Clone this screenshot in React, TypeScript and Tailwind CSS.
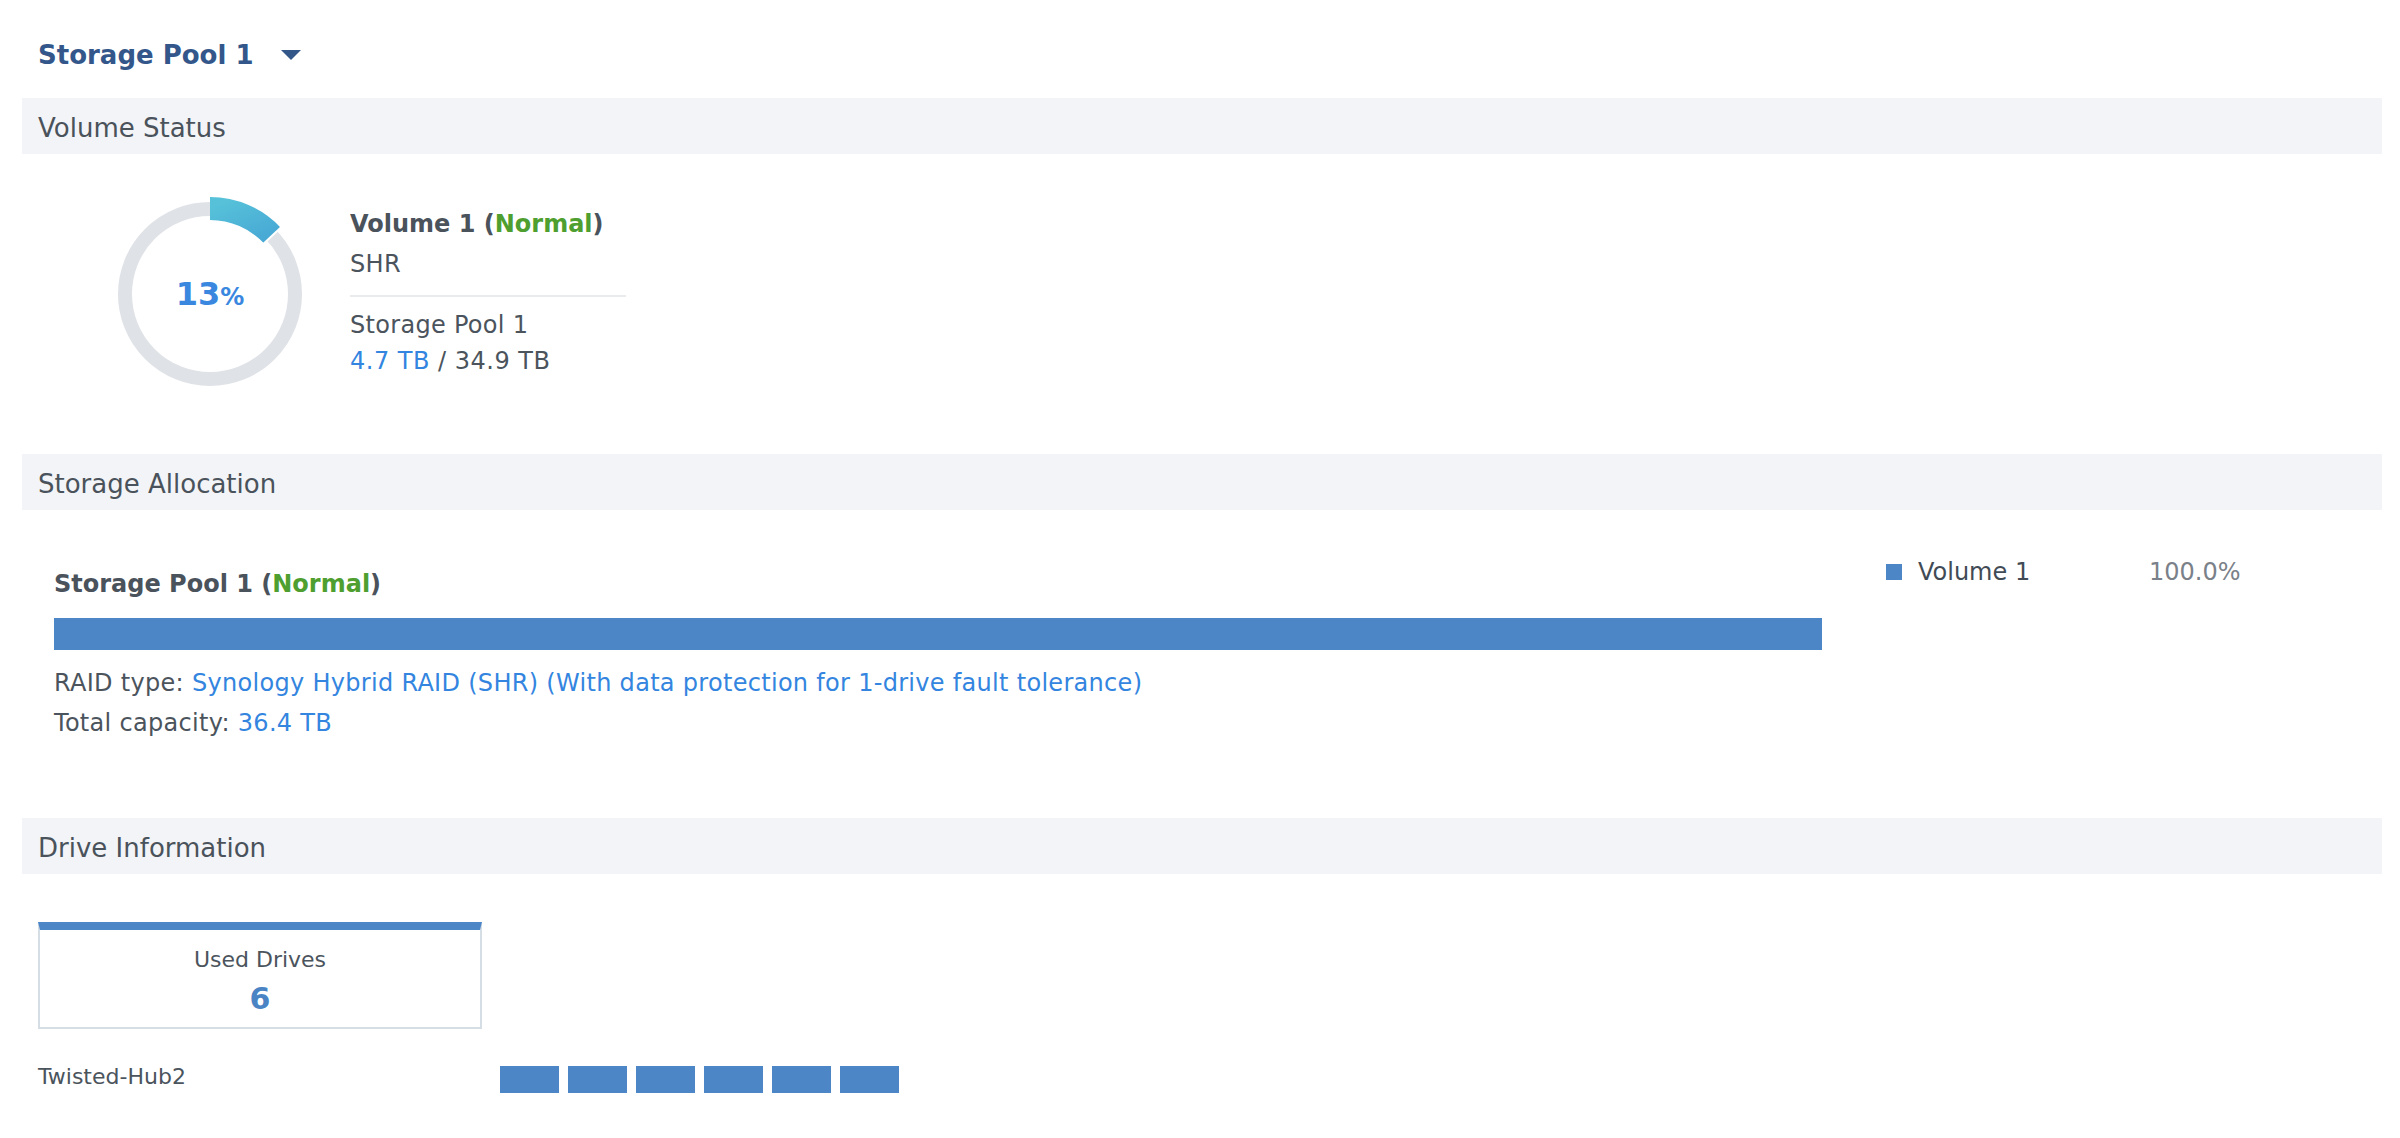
function SectionHeader({ title }: { title: string }) {
  return (
    <div className="flex h-[56px] items-center bg-[#f3f4f7] pl-[16px] pt-[3px] text-[26px] leading-[36px] text-[#4a525b]">
      {title}
    </div>
  );
}

function UsageRing() {
  return (
    <div className="relative h-[200px] w-[200px] shrink-0">
      <svg width="200" height="200" viewBox="0 0 200 200">
        <defs>
          <linearGradient id="ringBlue" x1="0" y1="0" x2="1" y2="1">
            <stop offset="0%" stopColor="#56c1d9" />
            <stop offset="100%" stopColor="#48a9d5" />
          </linearGradient>
        </defs>
        <circle cx="100" cy="100" r="85" fill="none" stroke="#dfe2e6" strokeWidth="14" />
        <path d="M100 14.5 A85.5 85.5 0 0 1 162.3 41.5" fill="none" stroke="url(#ringBlue)" strokeWidth="23" />
        <line x1="152.5" y1="50.7" x2="172.2" y2="32.2" stroke="#ffffff" strokeWidth="2" />
      </svg>
      {/* percentage in the middle */}
      <div className="absolute inset-0 flex items-center justify-center pt-[3px] font-bold text-[#3a87df]">
        <span className="text-[32px] leading-[36px]">
          13<span className="text-[24px]">%</span>
        </span>
      </div>
    </div>
  );
}

function VolumeStatus() {
  return (
    <div className="flex h-[300px] items-start pl-[88px] pt-[40px]">
      <UsageRing />
      <div className="ml-[40px] mt-[10px] w-[276px] text-[24px] text-[#4b545d]">
        <div className="font-bold leading-[40px] text-[#4a525b]">
          Volume 1 (<span className="text-[#4e9f2f]">Normal</span>)
        </div>
        <div className="leading-[40px] tracking-[0.3px]">SHR</div>
        <div className="mt-[11px] h-[2px] bg-[#e9ebef]" />
        <div className="mt-[10px] leading-[36px] tracking-[0.3px]">Storage Pool 1</div>
        <div className="leading-[36px] tracking-[0.5px]">
          <span className="text-[#3385e0]">4.7 TB</span> / 34.9 TB
        </div>
      </div>
    </div>
  );
}

function StorageAllocation() {
  return (
    <div className="flex h-[308px] items-start pl-[32px] text-[24px] text-[#4b545d]">
      <div className="w-[1768px] pt-[58px]">
        <div className="font-bold leading-[32px] text-[#4a525b]">
          Storage Pool 1 (<span className="text-[#4e9f2f]">Normal</span>)
        </div>
        <div className="mt-[18px] h-[32px] bg-[#4d86c6]" />
        <div className="mt-[13px] leading-[40px] tracking-[0.3px]">
          RAID type:{' '}
          <span className="text-[#3385e0]">
            Synology Hybrid RAID (SHR) (With data protection for 1-drive fault tolerance)
          </span>
        </div>
        <div className="leading-[40px] tracking-[0.3px]">
          Total capacity: <span className="text-[#3385e0]">36.4 TB</span>
        </div>
      </div>

      {/* legend */}
      <div className="ml-[64px] pt-[46px]">
        <div className="flex h-[32px] items-center leading-[32px]">
          <div className="h-[16px] w-[16px] bg-[#4d86c6]" />
          <span className="ml-[16px] w-[231px] text-[#414b55]">Volume 1</span>
          <span className="text-[#7a8189]">100.0%</span>
        </div>
      </div>
    </div>
  );
}

function DriveInformation() {
  const drives = [1, 2, 3, 4, 5, 6];
  return (
    <div className="pl-[16px] pt-[48px] text-[#4b545d]">
      <div className="box-border flex h-[107px] w-[444px] flex-col items-center border-x-2 border-b-2 border-t-8 border-x-[#d5dde5] border-b-[#d5dde5] border-t-[#4d86c6] pt-[16px]">
        <div className="text-[22px] leading-[28px]">Used Drives</div>
        <div className="mt-[7px] text-[30px] font-bold leading-[36px] text-[#4a84c5]">6</div>
      </div>

      <div className="mt-[37px] flex items-start">
        <div className="w-[462px] text-[22px] leading-[21px]">Twisted-Hub2</div>
        <div className="flex gap-[9px]">
          {drives.map((d) => (
            <div key={d} className="h-[27px] w-[59px] bg-[#4d86c6]" />
          ))}
        </div>
      </div>
    </div>
  );
}

export default function App() {
  return (
    <div className="min-h-screen w-full bg-white pl-[22px] pr-[18px] font-['DejaVu_Sans',sans-serif]">
      {/* pool title */}
      <div className="flex h-[98px] items-start pl-[16px] pt-[37px]">
        <div className="flex h-[36px] items-center">
          <span className="text-[26px] font-bold leading-[36px] text-[#33578a]">Storage Pool 1</span>
          <svg className="ml-[27px]" width="20" height="10" viewBox="0 0 20 10">
            <path d="M0 0 H20 L10 10 Z" fill="#34578a" />
          </svg>
        </div>
      </div>

      <SectionHeader title="Volume Status" />
      <VolumeStatus />

      <SectionHeader title="Storage Allocation" />
      <StorageAllocation />

      <SectionHeader title="Drive Information" />
      <DriveInformation />
    </div>
  );
}
